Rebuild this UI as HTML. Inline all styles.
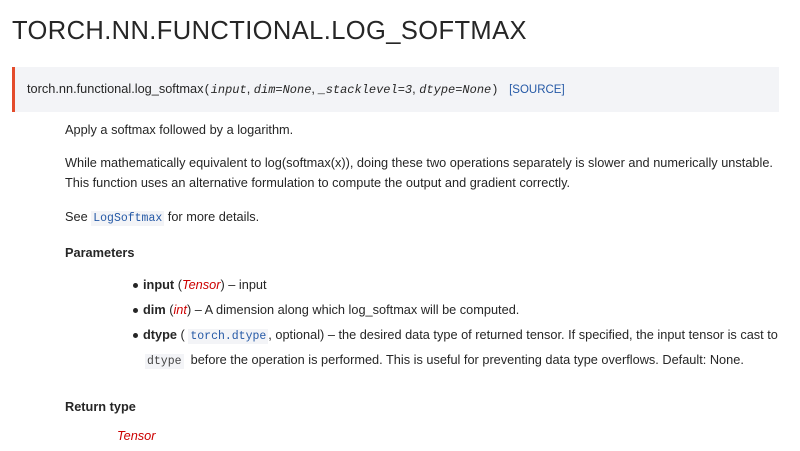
<!DOCTYPE html><html><head><style>
body{margin:0;width:800px;height:451px;background:#fff;font-family:"Liberation Sans",sans-serif;color:#262626;position:relative;overflow:hidden}
.a{position:absolute;white-space:nowrap;font-size:12.75px;line-height:16px}
h1{position:absolute;left:12px;top:17px;margin:0;font-weight:400;font-size:25.5px;letter-spacing:0.4px;color:#262626}
.sig{position:absolute;left:12px;top:67px;width:767px;height:45px;background:#f3f4f7;border-left:3px solid #e44c2c;box-sizing:border-box}
.m{font-family:"Liberation Mono",monospace;font-size:12px}
.i{font-style:italic}
.r{color:#c00;font-style:italic}
.c{font-family:"Liberation Mono",monospace;font-size:11.5px;color:#2559a6;background:#f3f4f7;padding:1px 2px}
.cg{font-family:"Liberation Mono",monospace;font-size:11.5px;color:#444;background:#f3f4f7;padding:1px 2px}
.dot{position:absolute;width:5px;height:5px;border-radius:50%;background:#262626}
</style></head><body>
<h1>TORCH.NN.FUNCTIONAL.LOG_SOFTMAX</h1>
<div class="sig"></div>
<div class="a" style="left:27px;top:81px">torch.nn.functional.log_softmax<span class="m">(</span><span class="m i">input</span>, <span class="m i">dim=None</span>, <span class="m i">_stacklevel=3</span>, <span class="m i">dtype=None</span><span class="m">)</span> &nbsp;&nbsp;<span style="color:#2559a6;font-size:11.5px">[SOURCE]</span></div>
<div class="a" style="left:65px;top:122px">Apply a softmax followed by a logarithm.</div>
<div class="a" style="left:65px;top:155px">While mathematically equivalent to log(softmax(x)), doing these two operations separately is slower and numerically unstable.</div>
<div class="a" style="left:65px;top:175px">This function uses an alternative formulation to compute the output and gradient correctly.</div>
<div class="a" style="left:65px;top:209px">See <span class="c">LogSoftmax</span> for more details.</div>
<div class="a" style="left:65px;top:245px;font-weight:700">Parameters</div>
<div class="dot" style="left:133px;top:283px"></div>
<div class="a" style="left:143px;top:277px"><b>input</b> (<span class="r">Tensor</span>) – input</div>
<div class="dot" style="left:133px;top:308px"></div>
<div class="a" style="left:143px;top:302px"><b>dim</b> (<span class="r">int</span>) – A dimension along which log_softmax will be computed.</div>
<div class="dot" style="left:133px;top:333px"></div>
<div class="a" style="left:143px;top:327px"><b>dtype</b> ( <span class="c">torch.dtype</span>, optional) – the desired data type of returned tensor. If specified, the input tensor is cast to</div>
<div class="a" style="left:145px;top:352px"><span class="cg">dtype</span> &nbsp;before the operation is performed. This is useful for preventing data type overflows. Default: None.</div>
<div class="a" style="left:65px;top:399px;font-weight:700">Return type</div>
<div class="a r" style="left:117px;top:428px">Tensor</div>
</body></html>
